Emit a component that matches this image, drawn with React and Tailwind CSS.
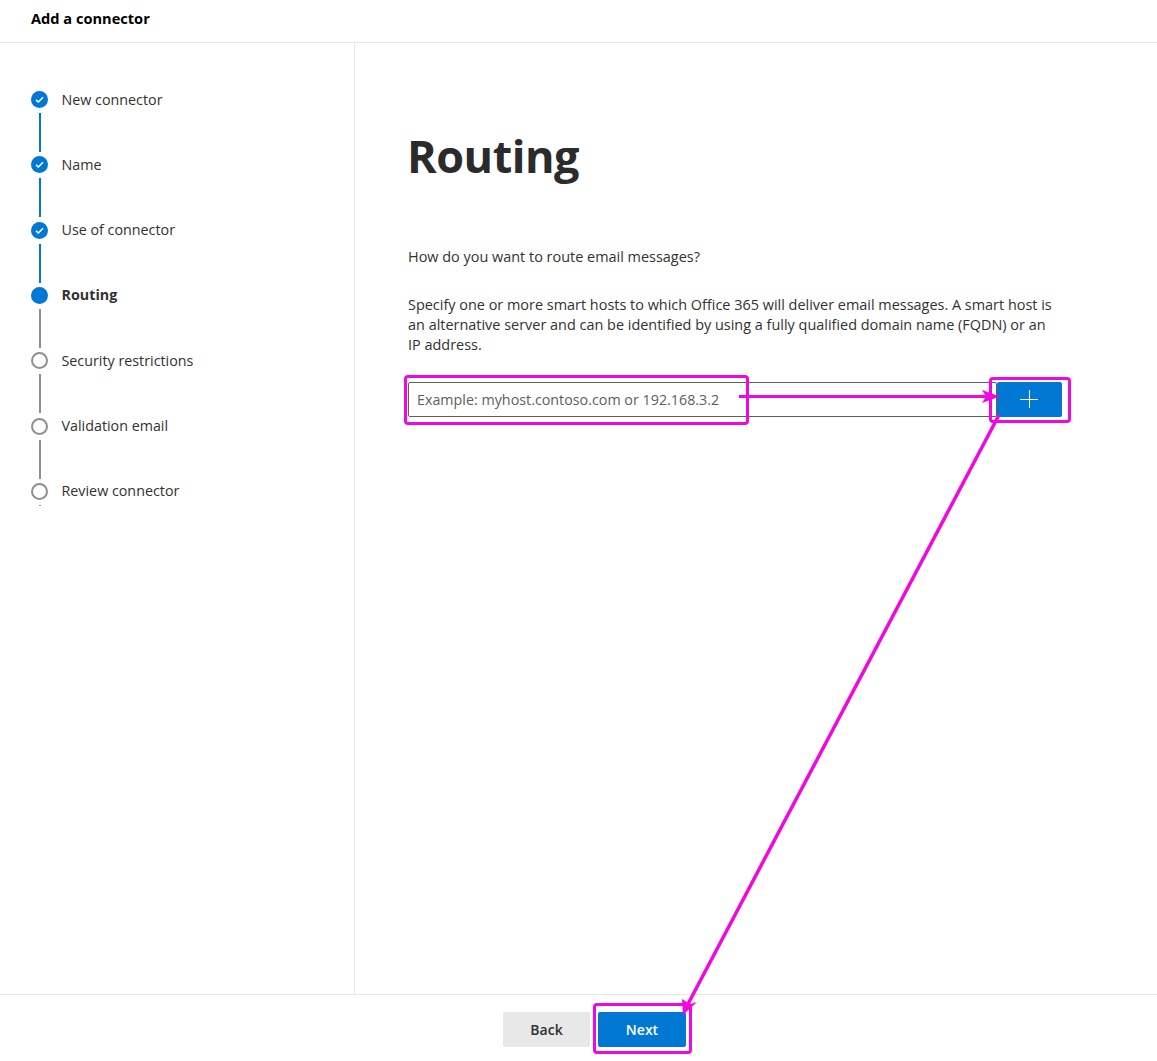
const STEPS = [
  { label: 'New connector', state: 'done' },
  { label: 'Name', state: 'done' },
  { label: 'Use of connector', state: 'done' },
  { label: 'Routing', state: 'current' },
  { label: 'Security restrictions', state: 'todo' },
  { label: 'Validation email', state: 'todo' },
  { label: 'Review connector', state: 'todo' },
];

const FONT = 'font-["Open_Sans","Noto_Sans",sans-serif]';
const HIGHLIGHT = 'absolute border-[3px] border-[#f008e0] rounded-[4px] pointer-events-none';

function StepDot({ state }) {
  if (state === 'done') {
    return (
      <span className="w-[17px] h-[17px] rounded-full bg-[#0078d4] flex items-center justify-center shrink-0">
        <svg width="11" height="11" viewBox="0 0 11 11" fill="none" stroke="white" strokeWidth="1.6">
          <path d="M2 5.8 L4.4 8 L9 3.2" />
        </svg>
      </span>
    );
  }
  if (state === 'current') {
    return <span className="w-[17px] h-[17px] rounded-full bg-[#0078d4] shrink-0" />;
  }
  return <span className="w-[17px] h-[17px] rounded-full border-2 border-[#8f8f8f] bg-white shrink-0" />;
}

function Step({ step, index }) {
  const isLast = index === STEPS.length - 1;
  const lineDone = step.state === 'done';
  return (
    <div className="flex flex-col">
      <div className="flex items-center h-[17px]">
        <StepDot state={step.state} />
        <span className={`ml-[13.5px] -mt-[1px] text-[14.3px] leading-[17px] whitespace-nowrap text-[#323130] ${step.state === 'current' ? 'font-bold' : ''}`}>
          {step.label}
        </span>
      </div>
      {isLast ? (
        <div className="ml-[8px] mt-[5px] w-[2px] h-px bg-[#8f8f8f]" />
      ) : (
        <div className={`ml-[8px] mt-[5px] mb-[4.33px] w-[2px] h-[39px] ${lineDone ? 'bg-[#0078d4]' : 'bg-[#8f8f8f]'}`} />
      )}
    </div>
  );
}

export default function App() {
  return (
    <div className={`relative w-[1157px] h-[1061px] overflow-hidden bg-white flex flex-col ${FONT}`}>
      <header className="h-[43px] shrink-0 border-b border-[#e8e8e8] pl-[31px] pt-[8px]">
        <h1 className="text-[14.6px] leading-[20px] font-bold text-black">Add a connector</h1>
      </header>

      <div className="flex flex-1 min-h-0">
        <nav className="w-[355px] shrink-0 border-r border-[#e8e8e8] pl-[31px] pt-[48px]">
          {STEPS.map((step, i) => (
            <Step key={step.label} step={step} index={i} />
          ))}
        </nav>

        <main className="flex-1 pl-[53px] pr-[95px] pt-[80px]">
          <h2 className="text-[45px] leading-[66px] -ml-px font-bold text-[#2b2b2b] tracking-[-0.5px]">Routing</h2>
          <p className="mt-[58px] text-[14.45px] leading-[20px] text-[#323130]">How do you want to route email messages?</p>
          <p className="mt-[28px] w-[648px] text-[14.45px] leading-[20px] text-[#323130]">
            Specify one or more smart hosts to which Office 365 will deliver email messages. A smart host is an alternative server and can be identified by using a fully qualified domain name (FQDN) or an IP address.
          </p>
          <div className="mt-[27px] flex h-[35px]">
            <input
              readOnly
              placeholder="Example: myhost.contoso.com or 192.168.3.2"
              className="flex-1 min-w-0 border border-[#605e5c] rounded-[2px] pl-[8px] text-[14.3px] text-[#323130] placeholder:text-[#605e5c] outline-none"
            />
            <button className="w-[65px] bg-[#0078d4] rounded-[2px] flex items-start justify-center pt-[8px] pr-px">
              <svg width="18" height="18" viewBox="0 0 18 18" stroke="white" strokeWidth="1">
                <path d="M0 9.5 H18 M9.5 0 V18" />
              </svg>
            </button>
          </div>
        </main>
      </div>

      <footer className="h-[67px] shrink-0 border-t border-[#e8e8e8] flex justify-center gap-[8px] pt-[17px] pl-[32px]">
        <button className="w-[87px] h-[35px] rounded-[2px] bg-[#e8e8e8] text-[14px] font-semibold text-[#323130]">Back</button>
        <button className="w-[88px] h-[35px] rounded-[2px] bg-[#0078d4] text-[14px] font-semibold text-white">Next</button>
      </footer>

      <div className={`${HIGHLIGHT} left-[404px] top-[375px] w-[345px] h-[50px]`} />
      <div className={`${HIGHLIGHT} left-[989px] top-[377px] w-[82px] h-[46px]`} />
      <div className={`${HIGHLIGHT} left-[593px] top-[1003px] w-[99px] h-[51px]`} />

      <svg className="absolute inset-0 pointer-events-none" width="1157" height="1061" fill="none">
        <path d="M739 396.5 H990" stroke="#f008e0" strokeWidth="3" />
        <path d="M1000 396.5 L982 390 L986 396.5 L982 403 Z" fill="#f008e0" />
        <path d="M999 415 L688 1004" stroke="#f008e0" strokeWidth="3.5" />
        <path d="M683 1015 L682 999 L690 1004 L697 1002 Z" fill="#f008e0" />
      </svg>
    </div>
  );
}
